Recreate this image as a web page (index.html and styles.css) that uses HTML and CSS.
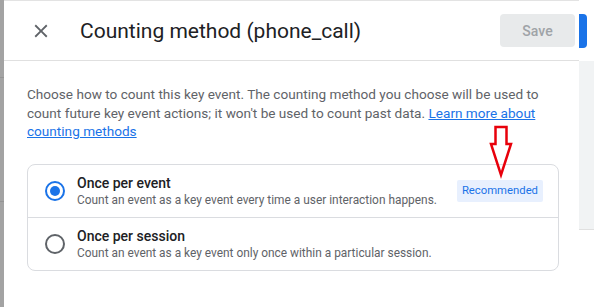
FILE: index.html
```html
<!DOCTYPE html>
<html>
	<head>
		<link rel="stylesheet" href="styles.css">
	</head>
	<body>
		<div class="page">
			<div class="backdrop-left"></div>
			<div class="dialog">
				<div class="dialog-header">
					<svg class="close-icon" viewBox="0 0 24 24" width="22" height="22">
						<path d="M19 6.41L17.59 5 12 10.59 6.41 5 5 6.41 10.59 12 5 17.59 6.41 19 12 13.41 17.59 19 19 17.59 13.41 12z"/>
					</svg>
					<div class="dialog-title">Counting method (phone_call)</div>
					<span class="save-button">Save</span>
				</div>
				<div class="dialog-body">
					<p class="intro">Choose how to count this key event. The counting method you choose will be used to count future key event actions; it won't be used to count past data. <a href="#">Learn more about counting methods</a></p>
					<div class="options">
						<div class="option">
							<span class="radio radio-checked"></span>
							<div class="option-text">
								<div class="option-title">Once per event</div>
								<div class="option-desc">Count an event as a key event every time a user interaction happens.</div>
							</div>
							<span class="chip">Recommended</span>
						</div>
						<div class="option">
							<span class="radio"></span>
							<div class="option-text">
								<div class="option-title">Once per session</div>
								<div class="option-desc">Count an event as a key event only once within a particular session.</div>
							</div>
						</div>
					</div>
				</div>
				<!-- annotation drawn over the screenshot -->
				<svg class="red-arrow" viewBox="0 0 26 56" width="26" height="56">
					<polygon points="7.5,3 18.5,3 18.5,20 23,20 13,51 3,20 7.5,20"/>
				</svg>
			</div>
			<div class="backdrop-right">
				<div class="right-top">
					<span class="primary-edge"></span>
				</div>
				<div class="right-panel"></div>
			</div>
		</div>
	</body>
</html>
```

FILE: styles.css
```css
body {
	margin: 0;
	background: #ffffff;
	font-family: 'Roboto', 'Liberation Sans', sans-serif;
	overflow: hidden;
}

.page {
	display: flex;
	width: 594px;
	height: 307px;
}

.backdrop-left {
	width: 4px;
	background-color: #a3a3a3;
	background-image: repeating-linear-gradient(to bottom, transparent 0px, transparent 77px, #949494 77px, #949494 78px, transparent 78px, transparent 124px);
}

.dialog {
	position: relative;
	width: 575px;
	background: #ffffff;
}

.dialog-header {
	display: flex;
	align-items: center;
	height: 59px;
	border-top: 1px solid #e3e3e3;
	border-bottom: 1px solid #e0e0e0;
	padding: 0 4px 0 26px;
}

.close-icon {
	fill: #5f6368;
	margin-right: 28px;
}

.dialog-title {
	flex: 1;
	font-size: 21px;
	color: #202124;
}

.save-button {
	display: inline-flex;
	align-items: center;
	justify-content: center;
	width: 75px;
	height: 33px;
	border-radius: 4px;
	background: #e8eaeb;
	color: #9fa3a7;
	font-size: 14px;
	font-weight: 500;
}

.dialog-body {
	padding: 24px 20px 0 23px;
}

.intro {
	margin: 0;
	font-size: 13.6px;
	line-height: 18.5px;
	color: #5f6368;
}

.intro a {
	color: #1a73e8;
}

.options {
	margin-top: 23px;
	border: 1px solid #dadce0;
	border-radius: 8px;
}

.option {
	display: flex;
	align-items: center;
	height: 52px;
	padding: 0 15px 0 17px;
}

.option + .option {
	border-top: 1px solid #dadce0;
}

.radio {
	box-sizing: border-box;
	width: 20px;
	height: 20px;
	border: 2px solid #5f6368;
	border-radius: 50%;
	margin-right: 12px;
	display: flex;
	align-items: center;
	justify-content: center;
}

.radio-checked {
	border-color: #1a73e8;
}

.radio-checked::after {
	content: '';
	width: 10px;
	height: 10px;
	border-radius: 50%;
	background: #1a73e8;
}

.option-text {
	flex: 1;
}

.option-title {
	font-size: 14px;
	line-height: 18px;
	font-weight: 500;
	color: #202124;
}

.option-desc {
	font-size: 11.9px;
	line-height: 16px;
	color: #5f6368;
}

.chip {
	padding: 3px 5px;
	font-size: 11.3px;
	line-height: 16px;
	color: #1a73e8;
	background: #e8f0fe;
	border-radius: 2px;
}

.red-arrow {
	position: absolute;
	left: 484px;
	top: 124px;
	fill: none;
	stroke: #e8000b;
	stroke-width: 2.5;
}

.backdrop-right {
	width: 15px;
	display: flex;
	flex-direction: column;
}

.right-top {
	height: 61px;
	padding-top: 14px;
	box-sizing: border-box;
}

.primary-edge {
	display: block;
	width: 8px;
	height: 34px;
	background: #1a73e8;
	border-radius: 0 4px 4px 0;
}

.right-panel {
	height: 168px;
	background: #f1f3f4;
	border-bottom: 1px solid #e0e0e0;
}
```
